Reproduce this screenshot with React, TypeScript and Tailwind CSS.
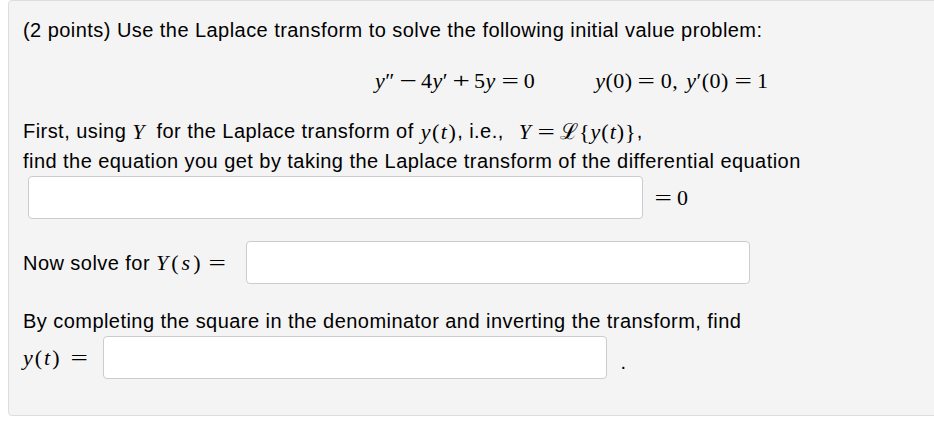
import React from 'react';

const M: React.FC<{ children: React.ReactNode; className?: string }> = ({ children, className = '' }) => (
  <span className={`font-['Liberation_Serif','DejaVu_Serif',serif] text-[22px] inline-flex items-baseline ${className}`}>{children}</span>
);

const V: React.FC<{ children: React.ReactNode }> = ({ children }) => <i className="italic">{children}</i>;

// TeX-wide symbol: stretch the Times glyph so it takes the width of the TeX one
const Sym: React.FC<{ children: React.ReactNode; rel?: boolean }> = ({ children, rel }) => (
  <span className={`inline-block w-[18px] text-center tracking-normal ${rel ? 'mx-[5px]' : 'mx-[4px]'}`}>
    <span className="inline-block scale-x-[1.4]">{children}</span>
  </span>
);

const AnswerBox: React.FC<{ w: string }> = ({ w }) => (
  <div className={`${w} h-[43px] shrink-0 rounded-[4px] border border-[#cccccc] bg-white`} />
);

const App: React.FC = () => {
  return (
    <div className="min-h-screen bg-white font-['Liberation_Sans',Arial,sans-serif] text-[20px] tracking-[0.45px] text-black overflow-hidden">
      <div className="ml-[8px] w-[960px] h-[416px] rounded-[4px] border border-[#dddddd] bg-[#f4f4f4] pl-[14px] pt-[17px]">
        {/* Intro */}
        <div className="h-[24px] flex items-center whitespace-nowrap">
          (2 points) Use the Laplace transform to solve the following initial value problem:
        </div>

        {/* Display equation */}
        <div className="mt-[24px] h-[28px] flex items-center pl-[352px] whitespace-nowrap tracking-normal">
          <M className="tracking-[0.5px]">
            <V>y</V>″<Sym>−</Sym>4<V>y</V>′<Sym>+</Sym>5<V>y</V><Sym rel>=</Sym>0
          </M>
          <M className="ml-[60px] tracking-[0.5px]">
            <V>y</V>(0)<Sym rel>=</Sym>0,<span className="w-[8px]" /><V>y</V>′(0)<Sym rel>=</Sym>1
          </M>
        </div>

        {/* Step 1 */}
        <div className="mt-[22px] h-[30px] flex items-center whitespace-nowrap">
          First, using&nbsp;<M className="mr-[6px] tracking-normal"><V>Y</V></M>&nbsp;for the Laplace transform of&nbsp;
          <M className="ml-[1px] tracking-[1.5px]"><V>y</V>(<V>t</V>)</M>, i.e.,&nbsp;
          <M className="ml-[9px] tracking-[1px]"><V>Y</V><Sym rel>=</Sym>ℒ{'{'}<V>y</V>(<V>t</V>){'}'}</M>,
        </div>
        <div className="h-[30px] flex items-center whitespace-nowrap">
          find the equation you get by taking the Laplace transform of the differential equation
        </div>
        <div className="flex items-center pl-[5px]">
          <AnswerBox w="w-[615px]" />
          <M className="ml-[6px]"><Sym rel>=</Sym>0</M>
        </div>

        {/* Step 2 */}
        <div className="mt-[22px] flex items-center whitespace-nowrap">
          Now solve for&nbsp;<M className="tracking-[3px]"><V>Y</V>(<V>s</V>)<Sym rel>=</Sym></M>
          <div className="ml-[15px]">
            <AnswerBox w="w-[504px]" />
          </div>
        </div>

        {/* Step 3 */}
        <div className="mt-[22px] h-[30px] flex items-center whitespace-nowrap">
          By completing the square in the denominator and inverting the transform, find
        </div>
        <div className="flex items-center whitespace-nowrap">
          <M className="tracking-[2px]"><V>y</V>(<V>t</V>)<span className="ml-[4px]" /><Sym rel>=</Sym></M>
          <div className="ml-[9px]">
            <AnswerBox w="w-[504px]" />
          </div>
          <span className="ml-[14px] mt-[8px]">.</span>
        </div>
      </div>
    </div>
  );
};

export default App;
